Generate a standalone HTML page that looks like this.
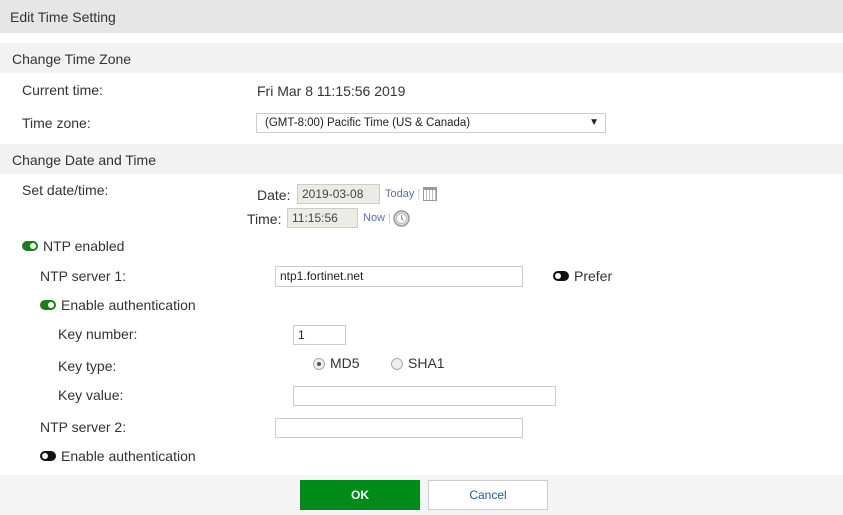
<!DOCTYPE html>
<html><head><style>
*{margin:0;padding:0;box-sizing:border-box}
body{width:843px;height:515px;position:relative;background:#fff;font-family:"Liberation Sans",sans-serif;color:#333;overflow:hidden}
.a{position:absolute;white-space:nowrap}
.l{font-size:14px}
.in{position:absolute;border:1px solid #ccc;background:#fff;font-size:12px;padding-left:4px;line-height:18px}
.tg{position:absolute;width:16px;height:10px;border-radius:5px}
.tg i{position:absolute;top:2px;width:6px;height:6px;border-radius:50%;background:#fff}
</style></head><body>
<div class="a" style="left:0;top:0;width:843px;height:33px;background:#e6e6e6"></div>
<div class="a l" style="left:10px;top:9px;color:#333">Edit Time Setting</div>
<div class="a" style="left:0;top:43px;width:843px;height:30px;background:#f2f2f2"></div>
<div class="a l" style="left:12px;top:51px">Change Time Zone</div>
<div class="a l" style="left:22px;top:82px">Current time:</div>
<div class="a l" style="left:257px;top:83px;font-size:14px">Fri Mar 8 11:15:56 2019</div>
<div class="a l" style="left:22px;top:115px">Time zone:</div>
<div class="in" style="left:256px;top:113px;width:350px;height:20px;color:#222;font-size:11.5px;padding-left:8px">(GMT-8:00) Pacific Time (US &amp; Canada)<span style="position:absolute;right:6px;top:0;font-size:10px">▼</span></div>
<div class="a" style="left:0;top:144px;width:843px;height:30px;background:#f2f2f2"></div>
<div class="a l" style="left:12px;top:152px">Change Date and Time</div>
<div class="a l" style="left:22px;top:182px">Set date/time:</div>
<div class="a l" style="left:257px;top:187px">Date:</div>
<div class="in" style="left:297px;top:184px;width:83px;height:20px;background:#ecece6;color:#444">2019-03-08</div>
<div class="a" style="left:385px;top:188px;font-size:11px;color:#5b6fa8">Today <span style="color:#ccc">|</span></div>
<div class="a" style="left:423px;top:187px;width:14px;height:14px;border:1px solid #999;border-top:3px solid #999;background:repeating-linear-gradient(90deg,#fff 0 2px,#bbb 2px 3px)"></div>
<div class="a l" style="left:247px;top:211px">Time:</div>
<div class="in" style="left:287px;top:208px;width:71px;height:20px;background:#ecece6;color:#444">11:15:56</div>
<div class="a" style="left:363px;top:212px;font-size:11px;color:#5b6fa8">Now <span style="color:#ccc">|</span></div>
<svg class="a" style="left:393px;top:210px" width="17" height="17" viewBox="0 0 17 17"><circle cx="8.5" cy="8.5" r="7.5" fill="#ddd" stroke="#999" stroke-width="1.5"/><circle cx="8.5" cy="8.5" r="5" fill="#fff" stroke="#bbb"/><path d="M8.5 5v3.5l2 2" stroke="#888" fill="none"/></svg>
<div class="tg" style="left:22px;top:241px;background:#1a7f1a"><i style="left:8px"></i></div>
<div class="a l" style="left:43px;top:238px">NTP enabled</div>
<div class="a l" style="left:40px;top:268px">NTP server 1:</div>
<div class="in" style="left:275px;top:266px;width:248px;height:21px;color:#222">ntp1.fortinet.net</div>
<div class="tg" style="left:553px;top:271px;background:#111"><i style="left:2px"></i></div>
<div class="a l" style="left:574px;top:268px">Prefer</div>
<div class="tg" style="left:40px;top:300px;background:#1a7f1a"><i style="left:8px"></i></div>
<div class="a l" style="left:61px;top:297px">Enable authentication</div>
<div class="a l" style="left:58px;top:326px">Key number:</div>
<div class="in" style="left:293px;top:325px;width:53px;height:20px;color:#222">1</div>
<div class="a l" style="left:58px;top:358px">Key type:</div>
<div class="a" style="left:313px;top:358px;width:12px;height:12px;border:1px solid #aaa;border-radius:50%;background:#eee"><div style="position:absolute;left:3px;top:3px;width:4px;height:4px;border-radius:50%;background:#555"></div></div>
<div class="a l" style="left:330px;top:355px">MD5</div>
<div class="a" style="left:391px;top:358px;width:12px;height:12px;border:1px solid #aaa;border-radius:50%;background:#eee"></div>
<div class="a l" style="left:408px;top:355px">SHA1</div>
<div class="a l" style="left:58px;top:387px">Key value:</div>
<div class="in" style="left:293px;top:386px;width:263px;height:20px"></div>
<div class="a l" style="left:40px;top:419px">NTP server 2:</div>
<div class="in" style="left:275px;top:418px;width:248px;height:20px"></div>
<div class="tg" style="left:40px;top:451px;background:#111"><i style="left:2px"></i></div>
<div class="a l" style="left:61px;top:448px">Enable authentication</div>
<div class="a" style="left:0;top:475px;width:843px;height:40px;background:#f4f4f4"></div>
<div class="a" style="left:300px;top:480px;width:120px;height:30px;background:#008a17;color:#fff;font-weight:bold;font-size:12px;text-align:center;line-height:30px">OK</div>
<div class="a" style="left:428px;top:480px;width:120px;height:30px;background:#fff;border:1px solid #ccc;color:#1c5f8a;font-size:12px;text-align:center;line-height:28px">Cancel</div>
</body></html>
